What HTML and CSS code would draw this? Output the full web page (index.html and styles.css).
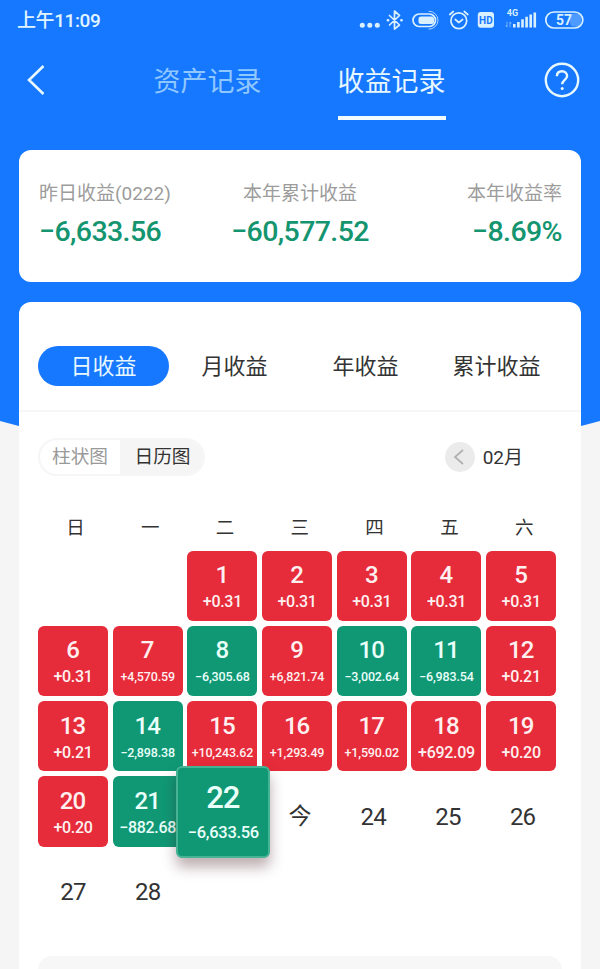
FILE: index.html
```html
<!DOCTYPE html>
<html lang="zh-CN">
<head>
<meta charset="utf-8">
<title>收益记录</title>
<link rel="stylesheet" href="styles.css">
</head>
<body>
<div class="screen">
  <div class="status">
    <span class="clock">上午11:09</span>
    <svg class="status-icons" width="230" height="30" viewBox="355 5 230 30" fill="none" stroke="#d9f1ff" stroke-width="1.7" stroke-linecap="round" stroke-linejoin="round">
      <g fill="#d9f1ff" stroke="none"><circle cx="362.3" cy="25.3" r="2.5"/><circle cx="369.8" cy="25.3" r="2.5"/><circle cx="377.3" cy="25.3" r="2.5"/></g>
      <path d="M389.500 15.500l10 9.500-5 4V11l5 4.500-10 9.500"/>
      <path d="M387.800 20.300h.4M401.300 20.300h.4" stroke-width="2.400"/>
      <rect x="413" y="14" width="22.500" height="12.500" rx="6.200"/>
      <rect x="418.500" y="16.500" width="15.500" height="7.600" rx="2.500" fill="#d9f1ff" stroke="none"/>
      <path d="M429 11.200a9 9 0 1 1 0 18" stroke-width="1" opacity=".75"/>
      <circle cx="458.800" cy="20.800" r="7.900"/>
      <path d="M455.300 19.500l3.500 3 3.800-3M449.800 14.500l3.500-3M467.800 14.500l-3.500-3"/>
      <rect x="477.800" y="12" width="16.200" height="15.800" rx="3" fill="#d9f1ff" stroke="none"/>
      <text x="485.900" y="24" class="hd">HD</text>
      <text x="512.500" y="15.800" class="net">4G</text>
      <path d="M507 22v5l-1-1.500M510 27v-5l1 1.500" stroke-width=".8" opacity=".6"/>
      <g stroke-width="2.600" stroke-linecap="butt"><path d="M514.300 27.500v-3.500M518.400 27.500v-5.500M522.500 27.500v-8.200M526.600 27.500v-10.700M530.700 27.500v-13M534.800 27.500V12.500"/></g>
      <rect x="570" y="13.500" width="11" height="13" rx="4" fill="#4d9bff" stroke="none"/>
      <rect x="545.800" y="12" width="37" height="16" rx="8"/>
      <text x="564" y="25" class="battery">57</text>
    </svg>
  </div>
  <div class="nav">
    <svg class="back" width="20" height="34" viewBox="0 0 20 34" fill="none" stroke="#e8f8ff" stroke-width="2.600"><path d="M17.500 3L3 17l14.500 14"/></svg>
    <div class="nav-tabs">
      <span class="nav-tab">资产记录</span>
      <span class="nav-tab active">收益记录</span>
    </div>
    <svg class="help" width="36" height="36" viewBox="0 0 36 36" fill="none" stroke="#e8f8ff" stroke-width="2.400"><circle cx="18" cy="18" r="16.200"/><path d="M12.900 14.300c0-3.200 2.200-5 5.100-5s5.100 1.900 5.100 4.700c0 3.700-4.900 4.200-4.900 8.300"/><circle cx="18.200" cy="26.500" r="1.500" fill="#e8f8ff" stroke="none"/></svg>
  </div>
  <div class="card summary">
    <div class="stat"><span class="label">昨日收益(0222)</span><span class="value">−6,633.56</span></div>
    <div class="stat center"><span class="label">本年累计收益</span><span class="value">−60,577.52</span></div>
    <div class="stat right"><span class="label">本年收益率</span><span class="value">−8.69%</span></div>
  </div>
  <div class="card detail">
    <div class="periods">
      <span class="period active">日收益</span><span class="period">月收益</span><span class="period">年收益</span><span class="period">累计收益</span>
    </div>
    <div class="tools">
      <div class="toggle"><span class="option">柱状图</span><span class="option on">日历图</span></div>
      <div class="month">
        <svg width="30" height="30" viewBox="0 0 30 30" fill="none"><circle cx="15" cy="15" r="15" fill="#ebebeb"/><path d="M18 8L10 15l8 7" stroke="#b0b0b0" stroke-width="1.700"/></svg>
        <span>02月</span>
      </div>
    </div>
    <div class="weekdays"><span>日</span><span>一</span><span>二</span><span>三</span><span>四</span><span>五</span><span>六</span></div>
    <div class="calendar">
      <div class="day first up"><b>1</b><i>+0.31</i></div>
      <div class="day up"><b>2</b><i>+0.31</i></div>
      <div class="day up"><b>3</b><i>+0.31</i></div>
      <div class="day up"><b>4</b><i>+0.31</i></div>
      <div class="day up"><b>5</b><i>+0.31</i></div>
      <div class="day up"><b>6</b><i>+0.31</i></div>
      <div class="day up"><b>7</b><i class="small">+4,570.59</i></div>
      <div class="day down"><b>8</b><i class="small">−6,305.68</i></div>
      <div class="day up"><b>9</b><i class="small">+6,821.74</i></div>
      <div class="day down"><b>10</b><i class="small">−3,002.64</i></div>
      <div class="day down"><b>11</b><i class="small">−6,983.54</i></div>
      <div class="day up"><b>12</b><i>+0.21</i></div>
      <div class="day up"><b>13</b><i>+0.21</i></div>
      <div class="day down"><b>14</b><i class="small">−2,898.38</i></div>
      <div class="day up"><b>15</b><i class="small">+10,243.62</i></div>
      <div class="day up"><b>16</b><i class="small">+1,293.49</i></div>
      <div class="day up"><b>17</b><i class="small">+1,590.02</i></div>
      <div class="day up"><b>18</b><i>+692.09</i></div>
      <div class="day up"><b>19</b><i>+0.20</i></div>
      <div class="day up"><b>20</b><i>+0.20</i></div>
      <div class="day down"><b>21</b><i>−882.68</i></div>
      <div class="day down selected"><b>22</b><i>−6,633.56</i></div>
      <div class="day plain today">今</div>
      <div class="day plain">24</div>
      <div class="day plain">25</div>
      <div class="day plain">26</div>
      <div class="day plain lead">27</div>
      <div class="day plain lead">28</div>
    </div>
    <div class="panel"></div>
  </div>
</div>
</body>
</html>
```
FILE: styles.css
```css
* { box-sizing: border-box; }

body {
  margin: 0;
  background: #f5f5f5;
  font-family: Roboto, "Noto Sans CJK SC", sans-serif;
  color: #333;
}

.screen {
  position: relative;
  height: 969px;
  overflow: hidden;
  padding: 0 19px;
}

.screen::before {
  content: "";
  position: absolute;
  z-index: -1;
  inset: 0 0 auto;
  height: 500px;
  background: #1677ff;
  clip-path: polygon(0 0, 100% 0, 100% 421px, 50% 500px, 0 421px);
}

.status {
  display: flex;
  justify-content: space-between;
  align-items: center;
  height: 40px;
  margin-right: -4px;
}

.clock {
  font: 500 19px/40px Roboto, "Noto Sans CJK SC", sans-serif;
  letter-spacing: -.4px;
  color: #e0f5ff;
  margin: 2px 0 0 -2px;
}

.status-icons text {
  font-family: Roboto, sans-serif;
  font-weight: 700;
  text-anchor: middle;
  stroke: none;
  fill: #d9f1ff;
}
.status-icons .hd { font-size: 10px; fill: #1677ff; }
.status-icons .net { font-size: 9px; }
.status-icons .battery { font-size: 14px; }

.nav {
  display: flex;
  align-items: flex-start;
  justify-content: space-between;
  height: 110px;
  padding: 22px 1px 0 7px;
}
.back { margin-top: 1px; }
.nav-tabs { display: flex; gap: 76px; margin-left: 9px; }
.nav-tab {
  height: 58px;
  padding-top: 2px;
  font-size: 27px;
  line-height: 36px;
  color: #8fc7ff;
}
.nav-tab.active {
  color: #e8f8ff;
  border-bottom: 4px solid #f2fcff;
}

.card { background: #fff; border-radius: 12px; }

.summary {
  display: flex;
  justify-content: space-between;
  height: 132px;
  padding: 30px 19px 0 20px;
}
.stat { display: flex; flex-direction: column; flex: 0 0 150px; }
.center { align-items: center; margin-left: -1px; }
.right { align-items: flex-end; }
.label { font-size: 19px; line-height: 28px; color: #9c9c9c; }
.value { font-size: 28.500px; line-height: 34px; font-weight: 500; color: #149570; margin-top: 6.500px; letter-spacing: -.6px; }

.detail { margin-top: 20px; height: 700px; }

.periods {
  display: grid;
  grid-template-columns: repeat(4, 131px);
  height: 110px;
  padding: 44px 19px 0;
  border-bottom: 2px solid #f6f6f6;
}
.period {
  height: 40px;
  border-radius: 20px;
  font-size: 22px;
  line-height: 42px;
  text-align: center;
}
.period.active { background: #1677ff; color: #e8f8ff; }

.tools {
  display: flex;
  justify-content: space-between;
  align-items: center;
  height: 38px;
  margin: 26px 58px 0 19px;
}
.toggle {
  display: flex;
  width: 167px;
  height: 38px;
  border: 2px solid #f6f6f6;
  border-radius: 19px;
  overflow: hidden;
}
.option {
  width: 81px;
  font-size: 18.700px;
  line-height: 35px;
  text-align: center;
  color: #999;
}
.option.on { width: 84px; padding-left: 2px; background: #f5f5f5; color: #333; }
.month { display: flex; align-items: center; gap: 8px; font-size: 19px; line-height: 30px; }
.month span { padding-top: 2px; }

.weekdays {
  display: grid;
  grid-template-columns: repeat(7, 74.800px);
  margin: 37px 0 0 19px;
  font-size: 18.500px;
  line-height: 30px;
  text-align: center;
}

.calendar {
  display: grid;
  grid-template-columns: repeat(7, 70px);
  grid-auto-rows: 70.400px;
  gap: 4.900px 4.700px;
  margin: 7.500px 0 0 19px;
}
.day {
  display: flex;
  flex-direction: column;
  align-items: center;
  padding-top: 9.500px;
  border-radius: 6px;
  color: #e9fff9;
}
.first { grid-column: 3; }
.up { background: #e62b3a; color: #fff0f0; }
.down { background: #109875; }
.day b { font-size: 24px; line-height: 31px; font-weight: 500; letter-spacing: -1px; margin-left: -1px; }
.day i { font-size: 16px; line-height: 21px; font-weight: 500; font-style: normal; white-space: nowrap; letter-spacing: -.3px; }
.day .small { font-size: 12.500px; letter-spacing: -.15px; line-height: 22px; }
.plain { color: #333; font-size: 24px; line-height: 30px; padding: 26px 0 0 3px; letter-spacing: -.8px; }
.today { font-size: 23px; padding: 26px 0 0 5px; }
.lead { padding: 25px 0 0; }
.selected {
  z-index: 1;
  width: 94px;
  height: 92px;
  margin: -10.500px 0 0 -11px;
  padding-top: 12px;
  border: 2px solid #45b394;
  box-shadow: 0 9px 14px rgba(60, 20, 30, .35);
}
.selected b { font-size: 31px; line-height: 36px; }
.selected i { font-size: 16.500px; line-height: 22px; margin-top: 6px; }

.panel {
  height: 60px;
  margin: 34px 19px 0;
  background: #f7f7f7;
  border-radius: 14px;
}
```
